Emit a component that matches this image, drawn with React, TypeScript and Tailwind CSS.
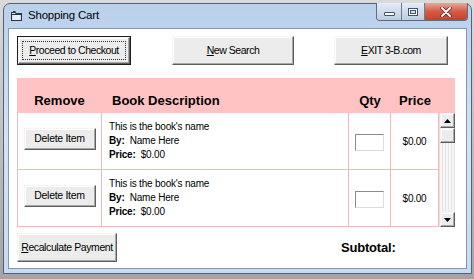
import React from "react";

const btn3d =
  "flex items-center justify-center bg-[#ececec] border border-t-[#f4f4f4] border-l-[#f4f4f4] border-r-[#5e5e5e] border-b-[#5e5e5e] shadow-[inset_-1px_-1px_0_#a8a8a8,inset_1px_1px_0_#ffffff] text-black";

function WinButton({
  children,
  className = "",
  isDefault = false,
}: {
  children: React.ReactNode;
  className?: string;
  isDefault?: boolean;
}) {
  if (isDefault) {
    return (
      <div className={`border border-[#1e1e1e] ${className}`}>
        <div className={`${btn3d} w-full h-full relative`}>
          <div className="absolute inset-[3px] border border-dotted border-[#333]" />
          <span className="relative">{children}</span>
        </div>
      </div>
    );
  }
  return <div className={`${btn3d} ${className}`}>{children}</div>;
}

function Row() {
  return (
    <div className="flex h-[57px] border-b border-[#f3b8b8]">
      <div className="w-[84px] border-r border-[#f3b8b8] flex justify-center pt-[15px]">
        <div className={`${btn3d} w-[72px] h-[22px] text-[10.5px] tracking-[-0.3px]`}>Delete Item</div>
      </div>
      <div className="w-[247px] border-r border-[#f3b8b8] pl-[7px] pt-[7px] text-[10px] leading-[14px] tracking-[-0.2px] whitespace-pre">
        <div>This is the book's name</div>
        <div>
          <span className="font-bold">By:</span>
          {"  Name Here"}
        </div>
        <div>
          <span className="font-bold">Price:</span>
          {"  $0.00"}
        </div>
      </div>
      <div className="w-[42px] border-r border-[#f3b8b8] flex justify-center pt-[21px]">
        <div className="w-[29px] h-[17px] bg-white border border-t-[#8a8a8a] border-l-[#8a8a8a] border-r-[#dcdcdc] border-b-[#dcdcdc]" />
      </div>
      <div className="w-[48px] border-r border-[#f3b8b8] flex items-center justify-center text-[10px] tracking-[-0.25px]">
        $0.00
      </div>
    </div>
  );
}

export default function App() {
  return (
    <div className="w-[474px] h-[279px] bg-gradient-to-b from-[#dadada] to-[#a4a4a4] pt-[3px] pl-[3px] font-['Liberation_Sans',Arial,sans-serif] text-black overflow-hidden">
      <div className="w-[469px] h-[271px] rounded-t-[7px] border border-[#52627a] bg-gradient-to-b from-[#b9d0eb] via-[#d3e3f5] to-[#c8dbf0] flex flex-col">
        {/* Title bar */}
        <div className="h-[24px] flex items-start">
          <svg className="ml-[7px] mt-[7px]" width="11" height="10" viewBox="0 0 11 10">
            <path d="M0.5 1.5 H4 L5 2.5 H10.5 V9.5 H0.5 Z" fill="#e8eef6" stroke="#23364f" strokeWidth="1.2" />
            <path d="M0.5 3.5 H10.5" stroke="#23364f" strokeWidth="1" />
            <path d="M2 0.5 H4.5" stroke="#23364f" strokeWidth="1" />
          </svg>
          <span className="ml-[6px] mt-[5px] text-[11.5px] leading-[13px] tracking-[-0.2px] text-black">Shopping Cart</span>
          <div className="ml-auto mr-[3px] -mt-[1px] flex h-[18px] border border-[#5b6b82] border-t-0 rounded-b-[4px] overflow-hidden">
            <div className="w-[25px] h-full bg-gradient-to-b from-[#e4ecf6] to-[#bccde2] border-r border-[#6b7b92] flex items-center justify-center">
              <div className="w-[11px] h-[4px] mt-[5px] bg-white border border-[#43536a] rounded-[1px]" />
            </div>
            <div className="w-[23px] h-full bg-gradient-to-b from-[#e4ecf6] to-[#bccde2] border-r border-[#6b7b92] flex items-center justify-center">
              <div className="w-[10px] h-[8px] border border-[#43536a] bg-white flex items-center justify-center">
                <div className="w-[6px] h-[4px] border border-[#43536a] bg-[#d6e0ec]" />
              </div>
            </div>
            <div className="w-[42px] h-full bg-gradient-to-b from-[#e9a697] via-[#d35a44] to-[#c9402a] flex items-center justify-center">
              <svg width="12" height="10" viewBox="0 0 12 10">
                <path d="M2 1 L10 9 M10 1 L2 9" stroke="#4a2018" strokeWidth="3.4" strokeLinecap="round" />
                <path d="M2 1 L10 9 M10 1 L2 9" stroke="#ffffff" strokeWidth="2" strokeLinecap="round" />
              </svg>
            </div>
          </div>
        </div>

        {/* Client area */}
        <div className="mx-[4px] h-[241px] border border-[#8396b0] bg-white pl-[8px] pt-[7px]">
          {/* Top buttons */}
          <div className="flex text-[10.5px] tracking-[-0.45px]">
            <WinButton isDefault className="w-[114px] h-[29px]">
              <span className="underline">P</span>roceed to Checkout
            </WinButton>
            <WinButton className="ml-[41px] w-[122px] h-[29px]">
              <span className="underline">N</span>ew Search
            </WinButton>
            <WinButton className="ml-[40px] w-[114px] h-[29px]">
              <span className="underline">E</span>XIT 3-B.com
            </WinButton>
          </div>

          {/* Table */}
          <div className="mt-[13px] w-[438px]">
            <div className="h-[35px] bg-[#ffc3c3] flex items-end pb-[5px] text-[13px] leading-[15px] font-bold">
              <div className="w-[85px] text-center">Remove</div>
              <div className="w-[247px] pl-[10px]">Book Description</div>
              <div className="w-[42px] text-center">Qty</div>
              <div className="w-[48px] text-center">Price</div>
            </div>
            <div className="flex">
              <div className="w-[422px] border-l border-[#f3b8b8]">
                <Row />
                <Row />
              </div>
              {/* Scrollbar */}
              <div className="w-[16px] h-[114px] flex flex-col bg-[#f2f2f2] border-l border-[#e2e2e2]">
                <div className={`${btn3d} h-[15px] w-full`}>
                  <svg width="7" height="4" viewBox="0 0 7 4">
                    <path d="M0 4 L3.5 0 L7 4 Z" fill="#000" />
                  </svg>
                </div>
                <div className={`${btn3d} h-[15px] w-full`} />
                <div className="flex-1 bg-[repeating-linear-gradient(90deg,#f6f6f6_0px,#f6f6f6_2px,#e6e6e6_2px,#e6e6e6_3px)]" />
                <div className={`${btn3d} h-[15px] w-full`}>
                  <svg width="7" height="4" viewBox="0 0 7 4">
                    <path d="M0 0 L3.5 4 L7 0 Z" fill="#000" />
                  </svg>
                </div>
              </div>
            </div>
          </div>

          {/* Bottom row */}
          <div className="mt-[6px] flex items-center">
            <WinButton className="w-[100px] h-[29px] text-[10.5px] tracking-[-0.4px]">
              <span className="underline">R</span>ecalculate Payment
            </WinButton>
            <div className="ml-[224px] text-[13px] font-bold tracking-[-0.2px]">Subtotal:</div>
          </div>
        </div>
      </div>
    </div>
  );
}
